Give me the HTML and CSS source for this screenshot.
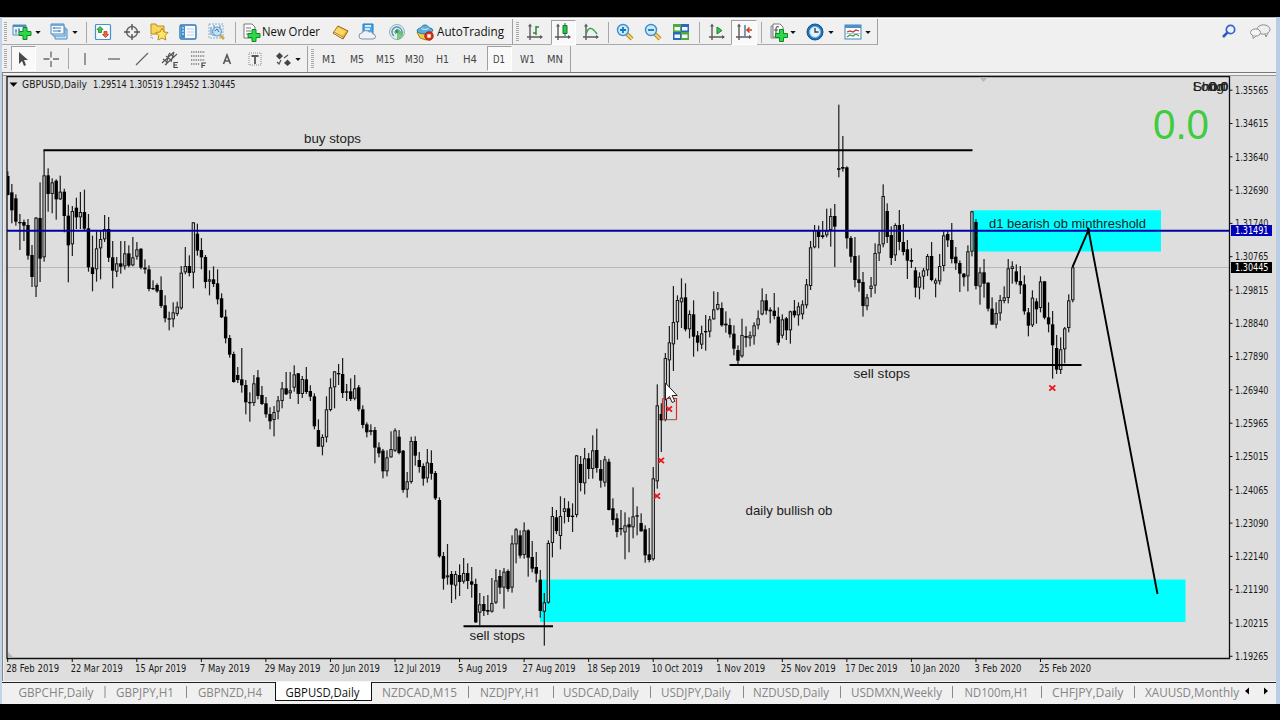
FILE: index.html
```html
<!DOCTYPE html>
<html lang="en">
<head>
<meta charset="utf-8">
<title>GBPUSD,Daily</title>
<link rel="stylesheet" href="styles.css">
</head>
<body>
<div class="screen">
  <div class="window">
    <header class="toolbars">
      <div class="row row-main"><div class="bar" id="main"></div></div>
      <div class="row row-draw"><div class="bar" id="draw"></div></div>
    </header>
    <main class="chart-frame"><svg id="chart" class="chart" width="1271" height="605" viewBox="5 76 1271 605"></svg></main>
    <nav class="tabs" id="tabs"></nav>
  </div>
</div>
<script src="app.js"></script>
</body>
</html>
```
FILE: styles.css
```css
* { box-sizing: border-box; }
body { margin: 0; background: #000; font-family: "Open Sans", "Noto Sans", sans-serif; }
.screen { width: 1280px; height: 720px; padding: 17px 0 16px; background: #000; overflow: hidden; }
.window { height: 687px; background: #f0f0f0; border-left: 2px solid #c3d3e8; border-right: 4px solid #b8cce6; display: flex; flex-direction: column; }
.toolbars { height: 55px; border-top: 1px solid #b5b5b5; display: flex; flex-direction: column; }
.row { height: 27px; display: flex; align-items: stretch; }
.row-main { border-top: 1px solid #fff; }
.bar { display: flex; align-items: center; height: 100%; }
.row-main .bar { background: linear-gradient(#a9a9a9, #a9a9a9) 0 100% / 876px 1px no-repeat; }
.cell { height: 25px; flex: none; display: flex; align-items: center; justify-content: center; overflow: visible; }
.cell svg { display: block; flex: none; overflow: visible; }
.pressed { background: #f9f9f9; border: 1px solid #fff; border-top-color: #a0a0a0; border-left-color: #a0a0a0; }
.sep { background: #a8a8a8; height: 21px; }
.edge { background: #a0a0a0; height: 26px; }
.grip { height: 20px; background: repeating-linear-gradient(#a9a9a9 0 1px, #f0f0f0 1px 2px); }
.chart-frame { height: 610px; flex: none; background: #dedede; border-top: 1px solid #777; border-left: 1px solid #888; box-shadow: inset 0 2px #f2f2f2, inset 0 3px #999, inset 1px 0 #eee; padding: 3px 0 0 2px; overflow: hidden; }
.chart { display: block; }
.tabs { height: 22px; border-top: 1px solid #222; display: flex; background: #f0f0f0; box-shadow: 0 -1px #f5f5f5; }
.tab { height: 18px; flex: none; }
.tab svg { display: block; overflow: visible; }
.tab-active { background: #fff; border: 1px solid #111; border-top: 0; height: 19px; margin-top: -1px; }
text { white-space: pre; }
.ui { font-family: "Open Sans", "Noto Sans", sans-serif; font-size: 12.5px; fill: #111; }
.tf { font-family: "DejaVu Sans Condensed", "DejaVu Sans", sans-serif; font-size: 10px; fill: #444; }
.tab-text { font-family: "Open Sans", sans-serif; font-size: 12px; fill: #858585; }
.tab-on { fill: #111; }
.axis { font-family: "DejaVu Sans Condensed", "DejaVu Sans", sans-serif; font-size: 10px; fill: #1a1a1a; }
.badge { fill: #fff; }
.note { font-family: "Liberation Sans", Arial, sans-serif; font-size: 13.6px; fill: #1c1c1c; }
.big { font-family: "Liberation Sans", Arial, sans-serif; font-size: 43px; fill: #3ecb3e; }
```
FILE: app.js
```js
const plus = (x, y) => `<path d="M${x-2} ${y-6}h4v4h4v4h-4v4h-4v-4h-4v-4h4z" fill="#2fd84a" stroke="#108a22"/>`;
const axes = '<path d="M4 2v15M1 14h15" fill="none" stroke="#5a5a5a" stroke-width="1.4"/><path d="M4 .5l2 3H2zM17 14l-3 2v-4z" fill="#5a5a5a"/>';
const glass = s => `<path d="M11 11l5 5" stroke="#b98a20" stroke-width="4"/><path d="M11 11l5 5" stroke="#f5d670" stroke-width="2"/><circle cx="7" cy="7" r="5.5" fill="#cdeafa" stroke="#3b8ed0" stroke-width="1.4"/><path d="${s}" stroke="#1878b8" stroke-width="1.8"/>`;
const icons = {
  newChart: '<path d="M1 2h13v10H1z" fill="#eef6fd" stroke="#4a8cc4"/><path d="M1 3h13" stroke="#4a8cc4" stroke-width="2"/><path d="M4 6v5M3 8h2M7 5v5M6 7h2" stroke="#4a7aa8"/>' + plus(13, 10.5),
  profiles: '<path d="M5 6h12v10H5z" fill="#cfe3f5" stroke="#4a8cc4"/><path d="M3 4h12v9H3z" fill="#dcecf9" stroke="#4a8cc4"/><path d="M1 1h13v10H1z" fill="#f1f8fe" stroke="#4a8cc4"/><path d="M1 2h13" stroke="#5d9bd0" stroke-width="1.6"/><path d="M3 5h8M3 8h8M4 4v2M9 7v2" stroke="#5080a8"/>',
  market: '<rect x="1.500" y="1.500" width="15" height="15" rx="1" fill="#f5faff" stroke="#4a90cc" stroke-width="1.2"/><path d="M6 3.500l3 3H7.500v3h-3v-3H3z" fill="#42c850" stroke="#16842a" stroke-width=".8"/><path d="M11.500 14.500l-3-3H10v-3h3v3h1.500z" fill="#f06a3c" stroke="#c03616" stroke-width=".8"/>',
  target: '<circle cx="9" cy="9" r="5.400" fill="none" stroke="#666" stroke-width="1.500"/><path d="M9 1v6M9 11v6M1 9h6M11 9h6" stroke="#555" stroke-width="1.400"/>',
  nav: '<path d="M1 3V1h5l1 2h7v8H1z" fill="#f7d65c" stroke="#b98d1b"/><path d="M1 12v3h3" stroke="#888" stroke-dasharray="1 1" fill="none"/><path d="M12 5l2 4 4 .5-3 3 .8 4.500-3.800-2-4 2 .7-4.500-3-3 4.300-.5z" fill="#ffe56b" stroke="#c08b14"/>',
  terminal: '<rect x="1" y="2" width="16" height="14" rx="1.500" fill="#f8fbff" stroke="#2d75b4" stroke-width="1.400"/><path d="M2 3h4v12H2z" fill="#3d8fd0"/><path d="M3 5h2M3 8h2M3 11h2" stroke="#fff"/><path d="M8 6h7M8 9h7M8 12h7" stroke="#ccd"/>',
  tester: '<path d="M1 1h14v14H1z" fill="#eaf3fb" stroke="#8fb0cc" stroke-dasharray="2 1"/><path d="M3 4v8M6 2v8M12 2v5M4 12h4" stroke="#5b87ae"/><path d="M12 12l4 4" stroke="#d2a640" stroke-width="2.500"/><circle cx="9" cy="8.500" r="4.500" fill="#b7dcf3" fill-opacity=".8" stroke="#5795c6"/><path d="M7 8l2-2 2 3" fill="none" stroke="#3c759e"/>',
  order: '<path d="M2 1h8l3 3v11H2z" fill="#fff" stroke="#777"/><path d="M4 5h5M4 8h5M4 11h4" stroke="#777"/>' + plus(12, 12.500),
  editor: '<path d="M2 10L7 3l10 5-5 8z" fill="#f0b429" stroke="#96650c"/><path d="M3 9l4-5 8 4-4 5z" fill="#fbd866"/><path d="M2 10l10 6v-2L3 9z" fill="#fff1b0" stroke="#96650c" stroke-width=".7"/>',
  cloud: '<path d="M4 1h10v10H4z" fill="#49a8ea" stroke="#1e78bd"/><path d="M6 3h6M6 6h5M6 9h4" stroke="#fff" stroke-width="1.300"/><path d="M3 16a3 3 0 0 1 0-6 4 3.500 0 0 1 7-1 3 3 0 0 1 4 2 2.500 2.500 0 0 1 0 5z" fill="#eef2f8" stroke="#8094ae"/>',
  signal: '<circle cx="9" cy="9" r="7.500" fill="#e1eee8" stroke="#8eb3be"/><path d="M6 13a5 5 0 1 1 7-1" fill="none" stroke="#5a95ba" stroke-width="1.400"/><path d="M8 11a2.500 2.500 0 1 1 3 0" fill="none" stroke="#3f8ba0"/><path d="M9 9v8c5-1 7-5 6-9z" fill="#5fb963" fill-opacity=".75"/><circle cx="9" cy="8.500" r="1.700" fill="#2a9750"/>',
  auto: '<path d="M1 9l3 6 6 2 6-4V8z" fill="#f5ca45" stroke="#aa7a13"/><path d="M1 8c2 4 14 4 16-1-1-2-3-2-4-2-1-4-7-4-8 0-2 0-4 1-4 3z" fill="#5caede" stroke="#287bab"/><path d="M5 5c2 2 6 2 8 0" stroke="#cfeeff" fill="none"/><circle cx="13" cy="13" r="4.200" fill="#dc3318" stroke="#a81e0a"/><path d="M11.300 11.300h3.400v3.400h-3.400z" fill="#fff"/>',
  bars: axes + '<path d="M10 3v9M10 4h3M7 10h3" stroke="#2c8a38" stroke-width="1.500"/>',
  candle: axes + '<path d="M11 0v13" stroke="#126c20"/><path d="M9 2.500h4v8H9z" fill="#2cc944" stroke="#11742a"/>',
  line: axes + '<path d="M4 11c3-8 6-7 11 0" fill="none" stroke="#35a548" stroke-width="1.500"/>',
  zoomIn: glass('M4 7h6M7 4v6'), zoomOut: glass('M4 7h6'),
  tile: '<path d="M1 1h8v8H1z" fill="#56a836"/><path d="M9 1h8v8H9z" fill="#2a68b8"/><path d="M1 9h8v8H1z" fill="#2a68b8"/><path d="M9 9h8v8H9z" fill="#56a836"/><path d="M2.500 4h5.500v3.500H2.500zM10 4h5.500v3.500H10zM2.500 11.500h5.500V15H2.500zM10 11.500h5.500V15H10z" fill="#eaf5ff"/>',
  scroll: axes + '<path d="M9 4l5 3.500L9 11z" fill="#3bc44e" stroke="#1b8430"/>',
  shift: axes + '<path d="M10 2v11" stroke="#447ca4" stroke-width="1.500"/><path d="M17 7h-5M14.500 4.500L12 7l2.500 2.500" fill="none" stroke="#ce431f" stroke-width="1.600"/>',
  indi: '<path d="M1 3h10v12H1z" fill="#ddd" stroke="#888"/><path d="M3 1h7l3 3v10H3z" fill="#fff" stroke="#777"/><path d="M9 4c-2-1-3 0-3 2v6M4 7h4" stroke="#555" fill="none" stroke-width="1.200"/>' + plus(11.500, 12.500),
  clock: '<circle cx="9" cy="9" r="8" fill="#1e70bb" stroke="#175487"/><circle cx="9" cy="9" r="5.500" fill="#e4f3fc" stroke="#76b4de"/><path d="M9 5v4h3.500" stroke="#345" fill="none" stroke-width="1.400"/>',
  template: '<rect x="1" y="2" width="16" height="14" fill="#fafdff" stroke="#4383ba"/><path d="M1 3.500h16" stroke="#4b91cb" stroke-width="3"/><path d="M3 9l3-1 3 1 3-2 3 1" fill="none" stroke="#b53427" stroke-width="1.300"/><path d="M3 14l3-2 3 1 3-2 3 2" fill="none" stroke="#3a9a47" stroke-width="1.300"/><path d="M2 10.500h14" stroke="#b7c9d5"/>',
  search: '<circle cx="10.500" cy="6.500" r="4.200" fill="#e8f3ff" stroke="#3561c8" stroke-width="1.700"/><path d="M7.300 9.700L3 14" stroke="#2e57bd" stroke-width="2.600"/>',
  chat: '<ellipse cx="12.500" cy="6.500" rx="6.500" ry="4.700" fill="#eee" stroke="#8d8d8d"/><path d="M14 11l1 3 2-4" fill="#eee" stroke="#8d8d8d"/><ellipse cx="4.500" cy="9.500" rx="5" ry="3.600" fill="#f5f5f5" stroke="#8d8d8d"/><path d="M2 12.500v3l3-2.500" fill="#f5f5f5" stroke="#8d8d8d"/>',
  arrow: '<path d="M6.300 8h5.400L9 11z" fill="#111"/>',
  pointer: '<path d="M5 2v12l3-3 2 5 2-1-2-5h4z" fill="#4a4a4a"/>',
  cross: '<path d="M9 1.500v6M9 11v6M1.500 9h6M11 9h6" stroke="#666" stroke-width="1.300"/>',
  vline: '<path d="M9 3v12" stroke="#666" stroke-width="1.300"/>',
  hline: '<path d="M3 9h12" stroke="#666" stroke-width="1.300"/>',
  trend: '<path d="M3 15L15 3" stroke="#666" stroke-width="1.300"/>',
  channel: '<path d="M1 13L13 2M4 15L16 4M2 9l5 4M5 6l5 4M8 3l5 4M5 15l3-11M10 12l3-10" stroke="#555" stroke-width="1.100"/><path d="M17 12.500h-4v5h4M13 15h3" fill="none" stroke="#444" stroke-width="1.200"/>',
  fibo: '<path d="M2 2h14M2 6h14M2 10h14M2 14h9" stroke="#777" stroke-width="1.300" stroke-dasharray="1.300 1"/><path d="M13 18v-5h4M13 15.500h3" fill="none" stroke="#444" stroke-width="1.200"/>',
  text: '<path d="M5.500 14L9 5l3.500 9M6.800 11h4.400" fill="none" stroke="#555" stroke-width="1.600"/>',
  label: '<rect x="3" y="3" width="12" height="12" fill="none" stroke="#888" stroke-dasharray="1 1"/><path d="M5.500 6h7M9 6v8" stroke="#555" stroke-width="1.800"/>',
  arrows: '<path d="M2 6l3.500-3.500L9 6 5.500 9.500zM10 13l3.500-3.500L17 13l-3.500 3z" fill="#444"/><path d="M3 12l2 2 2-4M10 8l4-3" fill="none" stroke="#555" stroke-width="1.300"/>'
};

// Tool items: [kind or icon, centre x, width, label]
const mainBar = [
  ['grip',5,3],['newChart',21,20],['arrow',38,8],['profiles',59,20],['arrow',75,8],['sep',86,1],['market',103,20],['target',132,20],['nav',159,20],['terminal',188,20],['tester',217,20],['sep',235,1],
  ['order',251,18],['label',291,58,'New Order'],['editor',340,20],['cloud',368,20],['signal',397,20],['auto',425,18],['label',470.5,67,'AutoTrading'],['edge',512,1],['grip',517,3],
  ['bars',535,20],['candle*',563,25],['line',591,20],['sep',608,1],['zoomIn',625,20],['zoomOut',653,20],['tile',681,20],['sep',699,1],['scroll',717,20],['shift*',744,26],['sep',761,1],
  ['indi',779,20],['arrow',793,8],['clock',815,20],['arrow',831,8],['template',853,20],['arrow',868,8],['edge',877,1],['search',1229,20],['chat',1260,20]];
const drawBar = [
  ['grip',5,3],['pointer*',23,25],['cross',51,20],['sep',68,1],['vline',85,18],['hline',114,18],['trend',142,18],['channel',170,18],['fibo',198,18],['text',227,18],['label2',255,18],['arrows',283,18],['arrow',298,8],['edge',307,1],['grip',312,3],
  ['tf',328.500,14,'M1'],['tf',357,14,'M5'],['tf',385.500,19,'M15'],['tf',414,19,'M30'],['tf',442.500,13,'H1'],['tf',470,14,'H4'],['tf*',499,25,'D1'],['tf',527.500,15,'W1'],['tf',555,16,'MN'],['edge',570,1]];

function buildBar(id, items) {
  const host = document.getElementById(id);
  let right = 2;
  for (const [name, cx, w, label] of items) {
    const kind = name.replace('*', '');
    const el = document.createElement('div');
    el.className = 'cell' + (name.endsWith('*') ? ' pressed' : '') + (['grip', 'sep', 'edge'].includes(kind) ? ' ' + kind : '');
    el.style.width = w + 'px';
    el.style.marginLeft = (cx - w / 2 - right) + 'px';
    right = cx + w / 2;
    if (label) {
      const len = name === 'tf*' ? 12 : w, cls = kind === 'tf' ? 'tf' : 'ui';
      el.innerHTML = `<svg width="${len}" height="18"><text class="${cls}" x="0" y="13" textLength="${len}" lengthAdjust="spacingAndGlyphs">${label}</text></svg>`;
    } else {
      const art = icons[kind === 'label2' ? 'label' : kind];
      if (art) el.innerHTML = `<svg width="18" height="18" viewBox="0 0 18 18" fill="none">${art}</svg>`;
    }
    host.appendChild(el);
  }
}
buildBar('main', mainBar);
buildBar('draw', drawBar);

// Candles: high, body top, body bottom, low in thirds of a pixel below y0; u = rising, d = falling
const series = [
 [0,130,'124,138,195,196d 162,187,241,280d 193,205,275,287d 252,276,277,360d 269,276,287,333d 267,285,377,389d 345,375,441,471d 261,263,470,501u 157,264,386,456d 60,136,382,395u 115,136,192,245d 145,157,192,250u 148,152,208,269d 137,185,208,210u 176,185,258,307d 224,257,346,457d 228,243,343,378u 203,233,262,297d 186,246,262,297u 179,246,296,300d 252,295,412,425d 317,412,432,484d 304,355,418,455u 303,327,355,448u 255,297,328,336u 261,297,383,396d 333,382,422,475d 381,400,425,441u 333,400,410,431d 333,370,409,419u 346,370,407,412d 321,382,406,409u 336,358,380,389u 355,356,413,418d 388,413,418,431d 406,418,477,484d 451,474,477,480d 460,465,484,488d 439,480,528,534d 496,526,565,577d 545,565,568,601d 517,547,568,592u 515,530,552,558u 408,428,535,539u 351,408,427,433u 376,408,429,439d 276,277,428,475u 281,311,362,377d 324,360,382,418d 375,381,456,475d 421,448,455,496u 409,448,462,471d 418,460,508,523d 490,505,562,564d 539,560,625,640d'],
 [55,320,'45,54,104,113d 95,102,186,188d 141,165,180,189d 84,178,196,218d 180,195,247,283d 217,246,249,305d 165,190,249,258u 150,172,228,238d 198,225,252,255d 231,250,283,293d 262,282,304,328d 258,276,300,349u 228,241,275,298u 186,205,243,265u 156,205,223,225d 156,211,220,237u 136,163,203,215u 159,160,222,252d 168,177,222,234u 141,178,216,222d 196,213,230,243d 220,229,319,328d 298,330,380,380d 343,351,380,406u 229,268,352,367u 175,202,270,274u 153,154,202,265u 132,159,163,195d 114,162,219,234d 192,214,218,243d 175,214,237,243d 165,205,236,241u 195,202,268,274d 256,268,315,325d 307,313,337,352d 313,330,336,346u 321,330,383,430d 367,382,400,412d 387,392,454,475d 391,412,454,469u 334,387,412,413u 325,331,392,396u 330,350,399,403d 390,392,510,518d 456,484,509,533u 350,363,486,491u 349,363,407,437d 396,420,441,458d 430,438,476,497d 387,427,475,488u 391,429,461,479d 453,459,535,540d'],
 [107,420,'232,240,409,413d 396,408,476,509d 372,466,472,494u 453,462,494,549d 453,462,497,538u 433,465,486,528d 414,459,485,491u 430,459,483,507d 441,484,494,533d 476,492,607,609d 519,553,578,616u 528,552,573,588d 525,570,575,585d 474,549,575,578u 447,481,548,552u 450,468,503,522d 444,455,503,566u 448,453,507,515d 346,370,503,518u 324,328,373,430u 331,346,407,415d 307,331,405,416u 328,331,413,470d 363,411,446,457d 396,441,461,487d 450,479,573,593d 519,547,575,677u 361,369,548,551u 261,288,369,412u 270,292,333,342d 229,288,348,388u 234,265,276,310u 244,265,291,306d 250,287,291,336d 105,106,285,292u 108,132,189,214d 84,115,190,223u 99,115,147,177d 46,91,147,176u 26,90,144,158d 120,147,182,203d 108,118,188,200u 116,125,270,271d 235,265,300,316d 280,295,336,352d 270,324,328,346d 277,316,337,418u 292,313,322,397d 202,289,322,355u 259,286,289,346d 280,309,334,335d 316,328,406,428d 324,403,420,427d 141,175,418,422u'],
 [161,250,'403,466,694,716u 460,492,511,606d 309,324,510,514u 228,277,331,420u 108,216,283,363u 136,150,217,269u 85,143,157,234u 100,142,238,244d 181,192,238,265u 151,193,260,320d 243,256,278,304d 227,250,284,297u 195,243,247,302d 198,208,245,262u 124,178,208,209u 126,162,178,181u 157,174,226,230d 184,221,226,248d 205,225,253,263d 226,251,296,316d 286,300,332,342d 206,255,319,323u 229,258,263,292d 244,256,265,289u 217,226,259,284u 181,205,226,238u 115,151,193,196u 132,151,182,194d 172,179,184,220d 129,182,198,208d 172,200,278,286d 193,208,257,265u 201,205,241,270d 182,184,241,281u 150,182,196,203d 157,169,196,227u 151,163,193,208u 87,103,166,175u'],
 [199,90,'453,472,588,600u 405,420,472,475u 407,420,441,475d 393,436,441,446d 356,421,436,442u 355,378,420,470u 342,378,410,531d 44,234,240,262u 138,231,236,245d 229,232,445,476d 438,444,500,518d 441,498,570,592d 496,568,579,605d 546,576,648,680d 612,622,649,661u 561,587,597,622u 460,489,587,611u 426,463,490,513u 283,318,463,472u 340,363,441,459d 409,435,504,525d 400,405,496,513u 360,405,456,481d 402,456,486,496d 450,478,512,567d 475,510,515,534d 531,541,593,622d 547,560,593,628u 534,541,560,598u 492,498,541,558u 456,498,570,574d 565,571,581,622u 492,528,574,584u 424,436,528,544u 424,432,451,471d 399,450,507,520d 471,500,520,540d 511,519,551,606d 549,551,562,589d 466,484,559,604u 362,364,485,499u 387,396,588,598d'],
 [241,180,'262,277,320,374u 237,277,311,353d 307,308,386,394d 352,386,434,434d 367,399,434,445u 345,360,400,422u 319,352,363,370u 237,265,354,370u 244,259,267,311u 253,274,305,313d 258,303,316,342d 286,313,394,404d 384,397,437,469d 331,353,436,441u 355,364,388,431d 289,304,384,397u 303,304,413,418d 367,412,433,457d 393,433,496,596d 465,504,569,582d 472,508,570,582u 441,445,508,550u 343,361,444,457u 256,262,361,367u']];

let s = '';
const fit = (cls, x, y, len, t) => `<text class="${cls}" x="${x}" y="${y}" textLength="${len}" lengthAdjust="spacingAndGlyphs">${t}</text>`;
s += '<rect x="973" y="210.300" width="188" height="41.200" fill="#0ff"/><rect x="540" y="579.500" width="645.500" height="42.500" fill="#0ff"/>';
s += '<path d="M7 267.500H1229" stroke="#b8b8b8"/>';
for (const [start, y0, rows] of series) {
  rows.split(' ').forEach((row, k) => {
    const up = row.endsWith('u');
    const [h, t, b, l] = row.slice(0, -1).split(',').map(v => y0 + v / 3);
    const x = 7.800 + 4.034 * (start + k);
    const left = start + k === 0 ? 7 : x - 1.700;
    const bh = Math.max(1.300, b - t);
    s += `<rect x="${x - .6}" y="${h}" width="1.200" height="${l - h}" fill="#1c1c1c"/>`;
    s += `<rect x="${left}" y="${t}" width="${x + 1.700 - left}" height="${bh}" fill="${up ? '#181818' : '#000'}"/>`;
    if (up && bh > 2) s += `<rect x="${x - .65}" y="${t + 1}" width="1.300" height="${bh - 2}" fill="#d0d0d0"/>`;
  });
}
s += '<path d="M7 230.800H1229" stroke="#0000a4" stroke-width="1.900"/>';
s += '<path d="M43.500 150.200H972.500M729.500 365H1081.500M463.500 626.200H553" stroke="#000" stroke-width="1.900"/>';
s += '<path d="M1072.500 267L1088.500 230L1157.500 594" fill="none" stroke="#000" stroke-width="1.900"/><path d="M1087 227v6l3-4z"/>';
s += fit('note', 304, 143.300, 57, 'buy stops') + fit('note', 853.500, 378.300, 56.500, 'sell stops') + fit('note', 469.500, 639.700, 55.500, 'sell stops') + fit('note', 745.500, 515.300, 87, 'daily bullish ob') + fit('note', 989, 228, 157, 'd1 bearish ob minthreshold');
for (const [x, y] of [[657, 496], [661, 460.500], [669, 409], [1052.300, 388]]) s += `<path d="M${x-3} ${y-2.600}L${x+3} ${y+2.600}M${x-3} ${y+2.600}L${x+3} ${y-2.600}" stroke="#e8161c" stroke-width="1.900"/>`;
s += '<path d="M662.500 398.500H676.500V419.700" fill="none" stroke="#e02a2a" stroke-width="1.200"/><path d="M662.500 398.500V419.700" stroke="#e02a2a" stroke-width="1.200"/><path d="M662.500 419.700h14" stroke="#855"/>';
s += '<path d="M665.500 383v17l4-3.500 2.700 6 2.600-1.200-2.600-5.800h5z" fill="#fff" stroke="#222"/>';
s += '<path d="M7 658.500V76.500H1229.500V658.500H6.500" fill="none" stroke="#111" stroke-width="1.300"/><path d="M979 77h9l-4.500 5z" fill="#b8b8b8"/><path d="M8 652l6 6H8z" fill="#b8b8b8"/>';
s += '<path d="M9.500 82.500h8l-4 4.200z"/>' + fit('axis', 22, 88, 65, 'GBPUSD,Daily') + fit('axis', 93, 88, 142.500, '1.29514 1.30519 1.29452 1.30445');
'1.35565 1.34615 1.33640 1.32690 1.31740 1.30765 1.29815 1.28840 1.27890 1.26940 1.25965 1.25015 1.24065 1.23090 1.22140 1.21190 1.20215 1.19265'.split(' ').forEach((p, i) => {
  const y = 90.200 + 33.300 * i;
  s += `<path d="M1229 ${y}h3.500" stroke="#111"/>` + fit('axis', 1235, y + 3.700, 33.500, p);
});
s += '<rect x="1231" y="225" width="41" height="11" fill="#0000b8"/>' + fit('axis badge', 1235, 234.200, 33.500, '1.31491');
s += '<rect x="1231" y="262" width="41" height="11"/>' + fit('axis badge', 1235, 271.200, 33.500, '1.30445');
[['28 Feb 2019',53],['22 Mar 2019',52],['15 Apr 2019',51],['7 May 2019',50],['29 May 2019',56],['20 Jun 2019',51],['12 Jul 2019',47],['5 Aug 2019',49],['27 Aug 2019',53],['18 Sep 2019',53],['10 Oct 2019',51],['1 Nov 2019',49],['25 Nov 2019',55],['17 Dec 2019',52],['10 Jan 2020',50],['3 Feb 2020',47],['25 Feb 2020',52]].forEach(([d, w], i) => {
  const x = 7.700 + 64.550 * i;
  s += `<path d="M${x} 658v4" stroke="#111"/>` + fit('axis', x - 1.500, 672, w, d);
});
s += fit('note', 1192.500, 91, 34, 'Short') + fit('note', 1193, 91, 31, 'Long') + fit('note', 1208, 91, 20, '0.0') + fit('note', 1209.500, 91, 19, '0.0');
s += fit('big', 1153, 138.500, 56, '0.0');
document.getElementById('chart').innerHTML = s;

// Tabs: label, left, right, text start, text end
const tabs = [['GBPCHF,Daily',7,105.500,19,94],['GBPJPY,H1',105.500,186.500,116,174],['GBPNZD,H4',186.500,274.500,198,262],['GBPUSD,Daily',274.500,371.500,285.500,359.500],['NZDCAD,M15',371.500,468.500,382,457],['NZDJPY,H1',468.500,553.500,480,540],['USDCAD,Daily',553.500,650.500,563,638.500],['USDJPY,Daily',650.500,743.500,661,730.500],['NZDUSD,Daily',743.500,840.500,753,829],['USDMXN,Weekly',840.500,952.500,851,942],['ND100m,H1',952.500,1041.500,964.500,1028.500],['CHFJPY,Daily',1041.500,1134.500,1052,1123.500],['XAUUSD,Monthly',1134.500,1276,1145,1239]];
document.getElementById('tabs').innerHTML = tabs.map(([t, l, r, a, b], i) => {
  const on = i === 3, w = r - l, from = i === 0 ? 5 : 0;
  const sep = i === 2 || on || i === 12 ? '' : `<path d="M${w + from - .5} 3v12" stroke="#8a8a8a"/>`;
  const nav = i === 12 ? '<path d="M114 4.500v7l-4-3.500zM129 4.500v7l4-3.500z"/>' : '';
  return `<div class="tab${on ? ' tab-active' : ''}" style="width:${w + from}px"><svg width="${w + from - (on ? 2 : 0)}" height="18">${fit('tab-text' + (on ? ' tab-on' : ''), a - l + from - (on ? 1.500 : .5), on ? 14.500 : 13.500, b - a, t)}${sep}${nav}</svg></div>`;
}).join('');
```
